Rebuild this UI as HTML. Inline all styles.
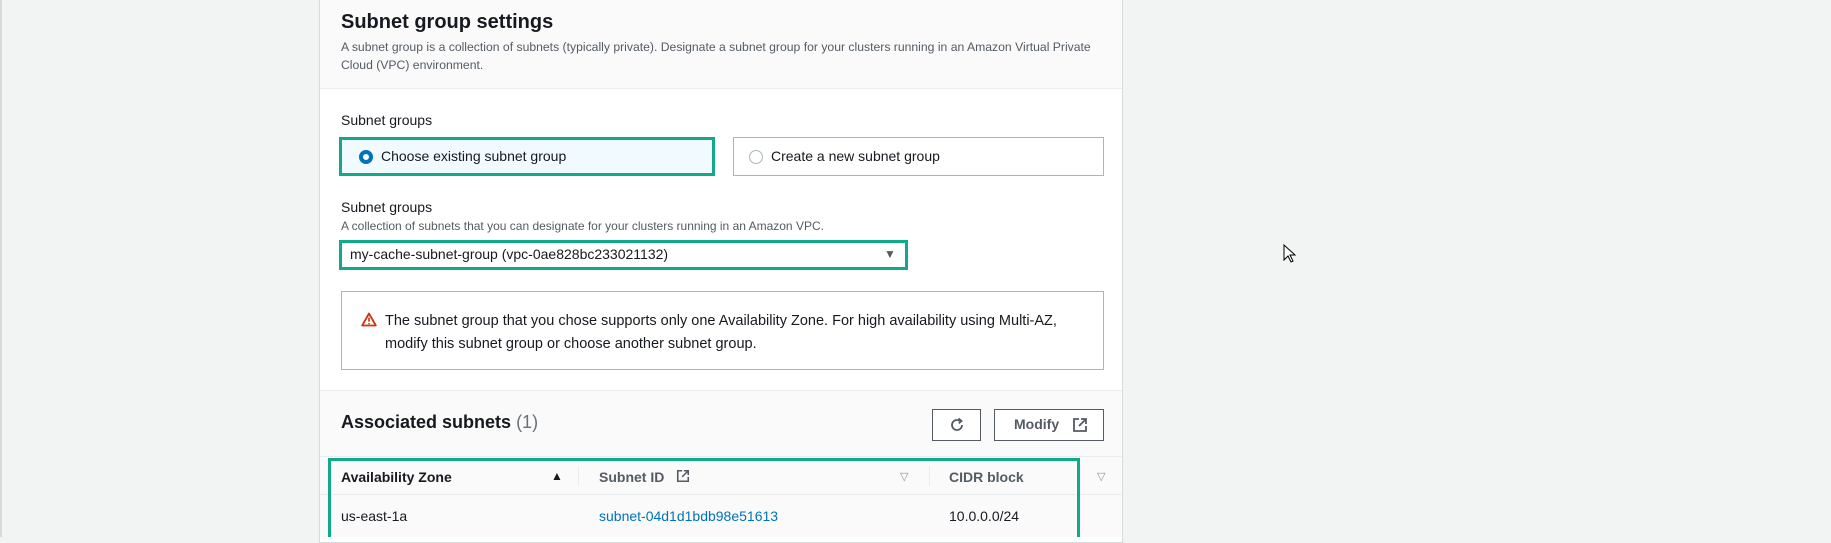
<!DOCTYPE html>
<html><head><meta charset="utf-8"><style>
*{box-sizing:border-box;margin:0;padding:0}
body{width:1831px;height:537px;overflow:hidden;background:#f2f3f3;font-family:"Liberation Sans",sans-serif;color:#16191f;position:relative}
.abs{position:absolute}
.panel{left:319px;top:-2px;width:804px;height:545px;background:#fff;border:1px solid #d5dbdb}
.t{position:absolute;white-space:nowrap}
</style></head><body>
<div class="abs" style="left:0;top:0;width:2px;height:537px;background:#d5dbdb"></div>
<div class="abs panel"></div>
<div class="abs" style="left:320px;top:0;width:802px;height:89px;background:#fafafa;border-bottom:1px solid #eaeded"></div>
<div class="t" style="left:341px;top:11px;font-size:20px;font-weight:bold">Subnet group settings</div>
<div class="t" style="left:341px;top:38px;font-size:12.2px;color:#545b64;line-height:18px">A subnet group is a collection of subnets (typically private). Designate a subnet group for your clusters running in an Amazon Virtual Private<br>Cloud (VPC) environment.</div>

<div class="t" style="left:341px;top:112px;font-size:14px">Subnet groups</div>
<div class="abs" style="left:339px;top:137px;width:376px;height:39px;background:#f1faff;border:3px solid #12a88a"></div>
<div class="abs" style="left:359px;top:150px;width:14px;height:14px;border-radius:50%;border:4px solid #0073bb;background:#fff"></div>
<div class="t" style="left:381px;top:148px;font-size:14px">Choose existing subnet group</div>
<div class="abs" style="left:733px;top:137px;width:371px;height:39px;border:1px solid #aab7b8"></div>
<div class="abs" style="left:749px;top:150px;width:14px;height:14px;border-radius:50%;border:1px solid #aab7b8"></div>
<div class="t" style="left:771px;top:148px;font-size:14px">Create a new subnet group</div>

<div class="t" style="left:341px;top:199px;font-size:14px">Subnet groups</div>
<div class="t" style="left:341px;top:219px;font-size:12px;color:#545b64">A collection of subnets that you can designate for your clusters running in an Amazon VPC.</div>
<div class="abs" style="left:339px;top:240px;width:569px;height:30px;border:3px solid #12a88a"></div>
<div class="t" style="left:350px;top:246px;font-size:14px">my-cache-subnet-group (vpc-0ae828bc233021132)</div>
<div class="t" style="left:884px;top:247px;font-size:12px;color:#545b64">▼</div>

<div class="abs" style="left:341px;top:291px;width:763px;height:79px;border:1px solid #aab7b8"></div>
<svg class="abs" style="left:361px;top:312px" width="16" height="15" viewBox="0 0 16 15"><path d="M8 1.5L14.8 13.5H1.2Z" fill="none" stroke="#d13212" stroke-width="1.8" stroke-linejoin="round"/><path d="M8 5.5v4.2M8 11v1.2" stroke="#d13212" stroke-width="1.6"/></svg>
<div class="t" style="left:385px;top:310px;font-size:14.5px;line-height:23px">The subnet group that you chose supports only one Availability Zone. For high availability using Multi-AZ,<br>modify this subnet group or choose another subnet group.</div>

<div class="abs" style="left:320px;top:390px;width:802px;height:147px;background:#fafafa;border-top:1px solid #eaeded"></div>
<div class="t" style="left:341px;top:412px;font-size:18px;font-weight:bold">Associated subnets <span style="font-weight:normal;color:#687078">(1)</span></div>
<div class="abs" style="left:932px;top:409px;width:49px;height:32px;border:1px solid #545b64;background:#fff"></div>
<svg class="abs" style="left:948px;top:416px" width="18" height="18" viewBox="0 0 18 18"><path d="M14 9a5 5 0 1 1-2-4" fill="none" stroke="#545b64" stroke-width="1.8"/><path d="M10.5 2.5L13.5 5 10.8 7.3" fill="none" stroke="#545b64" stroke-width="1.8"/></svg>
<div class="abs" style="left:994px;top:409px;width:110px;height:32px;border:1px solid #545b64;background:#fff"></div>
<div class="t" style="left:1014px;top:416px;font-size:14px;font-weight:bold;color:#545b64">Modify</div>
<svg class="abs" style="left:1072px;top:417px" width="16" height="16" viewBox="0 0 16 16"><path d="M7 2H2v12h12V9M9 2h5v5M14 2L7 9" fill="none" stroke="#545b64" stroke-width="1.8"/></svg>

<div class="abs" style="left:320px;top:456px;width:802px;height:1px;background:#eaeded"></div>
<div class="abs" style="left:320px;top:494px;width:802px;height:1px;background:#eaeded"></div>
<div class="abs" style="left:328px;top:458px;width:752px;height:79px;border:3px solid #12a88a;border-bottom:none"></div>
<div class="t" style="left:341px;top:469px;font-size:14px;font-weight:bold">Availability Zone</div>
<div class="t" style="left:551px;top:469px;font-size:12px">▲</div>
<div class="abs" style="left:578px;top:466px;width:1px;height:20px;background:#eaeded"></div>
<div class="t" style="left:599px;top:469px;font-size:14px;font-weight:bold;color:#545b64">Subnet ID</div>
<svg class="abs" style="left:676px;top:469px" width="14" height="14" viewBox="0 0 16 16"><path d="M7 2H2v12h12V9M9 2h5v5M14 2L7 9" fill="none" stroke="#545b64" stroke-width="1.8"/></svg>
<div class="t" style="left:900px;top:470px;font-size:11px;color:#879596">▽</div>
<div class="abs" style="left:929px;top:466px;width:1px;height:20px;background:#eaeded"></div>
<div class="t" style="left:949px;top:469px;font-size:14px;font-weight:bold;color:#545b64">CIDR block</div>
<div class="t" style="left:1097px;top:470px;font-size:11px;color:#879596">▽</div>
<div class="t" style="left:341px;top:508px;font-size:14px">us-east-1a</div>
<div class="t" style="left:599px;top:508px;font-size:14px;color:#0073bb">subnet-04d1d1bdb98e51613</div>
<div class="t" style="left:949px;top:508px;font-size:14px">10.0.0.0/24</div>

<svg class="abs" style="left:1283px;top:244px" width="14" height="20" viewBox="0 0 14 20"><path d="M1 1v15l4-4 3 6 2-1-3-6h5Z" fill="#fff" stroke="#000" stroke-width="1"/></svg>
</body></html>
